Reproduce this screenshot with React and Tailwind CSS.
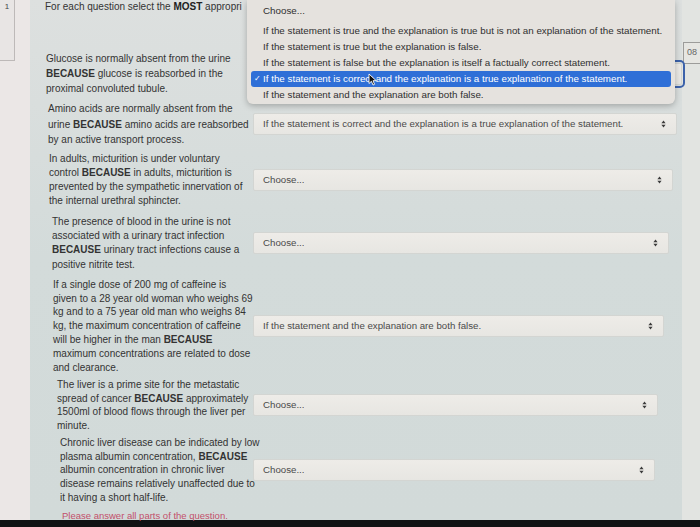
import React from 'react'

const rows = [
  {
    id: 'glucose',
    lines: [
      ['Glucose is normally absent from the urine'],
      [<b key="b">BECAUSE</b>, ' glucose is reabsorbed in the'],
      ['proximal convoluted tubule.'],
    ],
    box: 'pl-[16px] leading-[15px]',
    row: 'mt-[37px]',
    select: 'w-[429px]',
    value: '',
    focused: true,
  },
  {
    id: 'amino',
    lines: [
      ['Amino acids are normally absent from the'],
      ['urine ', <b key="b">BECAUSE</b>, ' amino acids are reabsorbed'],
      ['by an active transport process.'],
    ],
    box: 'pl-[18px] leading-[15.5px]',
    row: 'mt-[5px]',
    select: 'w-[424px]',
    value: 'If the statement is correct and the explanation is a true explanation of the statement.',
  },
  {
    id: 'micturition',
    lines: [
      ['In adults, micturition is under voluntary'],
      ['control ', <b key="b">BECAUSE</b>, ' in adults, micturition is'],
      ['prevented by the sympathetic innervation of'],
      ['the internal urethral sphincter.'],
    ],
    box: 'pl-[19px] leading-[14.3px]',
    row: 'mt-[4px]',
    select: 'w-[420px]',
    value: 'Choose...',
  },
  {
    id: 'blood',
    lines: [
      ['The presence of blood in the urine is not'],
      ['associated with a urinary tract infection'],
      [<b key="b">BECAUSE</b>, ' urinary tract infections cause a'],
      ['positive nitrite test.'],
    ],
    box: 'pl-[22px] leading-[14.3px]',
    row: 'mt-[6px]',
    select: 'w-[416px]',
    value: 'Choose...',
  },
  {
    id: 'caffeine',
    lines: [
      ['If a single dose of 200 mg of caffeine is'],
      ['given to a 28 year old woman who weighs 69'],
      ['kg and to a 75 year old man who weighs 84'],
      ['kg, the maximum concentration of caffeine'],
      ['will be higher in the man ', <b key="b">BECAUSE</b>],
      ['maximum concentrations are related to dose'],
      ['and clearance.'],
    ],
    box: 'pl-[23px] leading-[13.8px]',
    row: 'mt-[6px]',
    select: 'w-[411px]',
    value: 'If the statement and the explanation are both false.',
  },
  {
    id: 'liver',
    lines: [
      ['The liver is a prime site for the metastatic'],
      ['spread of cancer ', <b key="b">BECAUSE</b>, ' approximately'],
      ['1500ml of blood flows through the liver per'],
      ['minute.'],
    ],
    box: 'pl-[27px] leading-[13.7px]',
    row: 'mt-[3.5px]',
    select: 'w-[405px]',
    value: 'Choose...',
  },
  {
    id: 'chronic',
    lines: [
      ['Chronic liver disease can be indicated by low'],
      ['plasma albumin concentration, ', <b key="b">BECAUSE</b>],
      ['albumin concentration in chronic liver'],
      ['disease remains relatively unaffected due to'],
      ['it having a short half-life.'],
    ],
    box: 'pl-[30px] leading-[13.75px]',
    row: 'mt-[3px]',
    select: 'w-[402px]',
    value: 'Choose...',
  },
]

const options = [
  'If the statement is true and the explanation is true but is not an explanation of the statement.',
  'If the statement is true but the explanation is false.',
  'If the statement is false but the explanation is itself a factually correct statement.',
  'If the statement is correct and the explanation is a true explanation of the statement.',
  'If the statement and the explanation are both false.',
]

const Arrows = () => (
  <svg width="5" height="8" viewBox="0 0 5 8" className="shrink-0">
    <path d="M2.5 0.5 L4.6 3.2 H0.4 Z" fill="#3a3a3a" />
    <path d="M2.5 7.5 L4.6 4.8 H0.4 Z" fill="#3a3a3a" />
  </svg>
)

const Select = ({ value, width, focused }) => (
  <div
    className={`${width} h-[22px] flex items-center justify-between pl-[9px] pr-[10px] rounded-[2px] bg-gradient-to-b from-[#eeece8] to-[#e7e6e2] border border-[#d3d5d2] text-[9.7px] text-[#4a4a4a] ${
      focused ? 'relative z-10 outline-2 outline-offset-1 outline-[#3c62aa]' : ''
    }`}
  >
    <span className="truncate">{value}</span>
    <Arrows />
  </div>
)

const Cursor = () => (
  <svg width="9" height="13" viewBox="0 0 9 13" className="absolute left-[121px] top-[73px]">
    <path d="M1 1 V10.5 L3.4 8.3 L5 12 L6.6 11.3 L5 7.7 H8.2 Z" fill="#111" stroke="#fff" strokeWidth="0.9" />
  </svg>
)

export default function App() {
  return (
    <div className="w-[700px] h-[527px] overflow-hidden bg-[#111214] font-['Liberation_Sans',Arial,sans-serif] relative">
      <div className="flex h-[520px]">
        {/* left gutter */}
        <div className="w-[30px] shrink-0 bg-[#ebe7e6]">
          <div className="w-[15px] h-[61px] border-r border-b border-[#bdb9b8] bg-[#e8e5e4] flex justify-center pt-[2px]">
            <span className="text-[8px] leading-[10px] text-[#444]">1</span>
          </div>
        </div>

        {/* main panel */}
        <div className="flex-1 relative bg-gradient-to-b from-[#dde0df] via-[#d3dbda] to-[#d2dad9] text-[10px] text-[#333]">
          <div className="pl-[15px] w-[217px] h-[14px] leading-[14px] whitespace-nowrap overflow-hidden">
            For each question select the <b className="text-[#222]">MOST</b> appropri
          </div>

          {rows.map((r) => (
            <div key={r.id} className={`flex items-center ${r.row}`}>
              <div className={`w-[223px] shrink-0 whitespace-nowrap ${r.box}`}>
                {r.lines.map((l, i) => (
                  <div key={i}>{l}</div>
                ))}
              </div>
              <Select value={r.value} width={r.select} focused={r.focused} />
            </div>
          ))}

          <div className="pl-[32px] mt-[4px] leading-[14px] text-[#c2506b] text-[9.5px]">
            Please answer all parts of the question.
          </div>

          {/* open dropdown */}
          <div className="absolute left-[217px] top-0 w-[428px] h-[104px] z-20 bg-[#e5e2de] rounded-b-[6px] shadow-[0_2px_6px_rgba(0,0,0,0.25)] px-[4px] text-[9.8px] text-[#2f2f2f]">
            <div className="h-[16px] mt-[3px] flex items-center pl-[12px]">Choose...</div>
            <div className="mt-[4px]">
              {options.map((o, i) => (
                <div
                  key={i}
                  className={`h-[16px] flex items-center rounded-[3px] ${
                    i === 3 ? 'bg-[#2f6fd7] text-white' : ''
                  }`}
                >
                  <span className="w-[12px] pl-[3px] text-[8px]">{i === 3 ? '✓' : ''}</span>
                  <span className="whitespace-nowrap">{o}</span>
                </div>
              ))}
            </div>
            <Cursor />
          </div>
        </div>

        {/* right strip */}
        <div className="w-[24px] shrink-0 bg-[#e2e4e1] pt-[42px] pl-[1px] overflow-hidden">
          <div className="w-[28px] h-[22px] border border-[#9c9c9a] bg-[#e6e6e2] text-[9px] text-[#666] flex items-center pl-[3px]">
            08
          </div>
        </div>
      </div>
    </div>
  )
}
